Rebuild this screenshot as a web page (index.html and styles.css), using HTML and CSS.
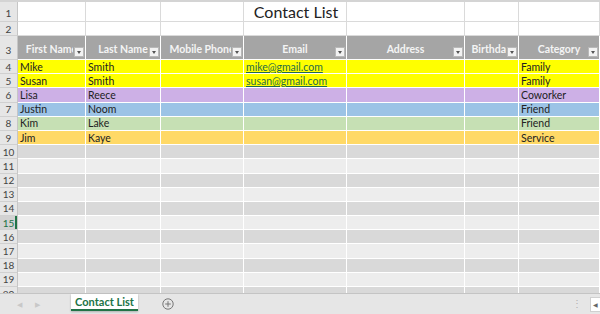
FILE: index.html
```html
<!DOCTYPE html>
<html lang="en">
<head>
  <meta charset="UTF-8">
  <title>Contact List</title>
  <link rel="stylesheet" href="styles.css">
</head>
<body>
  <div class="sheet">
    <div class="top-strip"></div>

    <div class="row blank r1">
      <div class="rh">1</div><div></div><div></div><div></div>
      <div class="title">Contact List</div><div></div><div></div><div></div>
    </div>
    <div class="row blank">
      <div class="rh">2</div><div></div><div></div><div></div><div></div><div></div><div></div><div></div>
    </div>

    <!-- table header -->
    <div class="row head">
      <div class="rh">3</div>
      <div><span>First Name</span><i class="drop"></i></div>
      <div><span>Last Name</span><i class="drop"></i></div>
      <div><span>Mobile Phone</span><i class="drop"></i></div>
      <div><span>Email</span><i class="drop"></i></div>
      <div><span>Address</span><i class="drop"></i></div>
      <div><span>Birthday</span><i class="drop"></i></div>
      <div><span>Category</span><i class="drop"></i></div>
    </div>

    <div class="row data yellow">
      <div class="rh">4</div><div>Mike</div><div>Smith</div><div></div>
      <div><a href="#">mike@gmail.com</a></div><div></div><div></div><div>Family</div>
    </div>
    <div class="row data yellow">
      <div class="rh">5</div><div>Susan</div><div>Smith</div><div></div>
      <div><a href="#">susan@gmail.com</a></div><div></div><div></div><div>Family</div>
    </div>
    <div class="row data purple">
      <div class="rh">6</div><div>Lisa</div><div>Reece</div><div></div>
      <div></div><div></div><div></div><div>Coworker</div>
    </div>
    <div class="row data blue">
      <div class="rh">7</div><div>Justin</div><div>Noom</div><div></div>
      <div></div><div></div><div></div><div>Friend</div>
    </div>
    <div class="row data green">
      <div class="rh">8</div><div>Kim</div><div>Lake</div><div></div>
      <div></div><div></div><div></div><div>Friend</div>
    </div>
    <div class="row data orange">
      <div class="rh">9</div><div>Jim</div><div>Kaye</div><div></div>
      <div></div><div></div><div></div><div>Service</div>
    </div>

    <!-- empty banded rows -->
    <div class="row data dark"><div class="rh">10</div><div></div><div></div><div></div><div></div><div></div><div></div><div></div></div>
    <div class="row data light"><div class="rh">11</div><div></div><div></div><div></div><div></div><div></div><div></div><div></div></div>
    <div class="row data dark"><div class="rh">12</div><div></div><div></div><div></div><div></div><div></div><div></div><div></div></div>
    <div class="row data light"><div class="rh">13</div><div></div><div></div><div></div><div></div><div></div><div></div><div></div></div>
    <div class="row data dark"><div class="rh">14</div><div></div><div></div><div></div><div></div><div></div><div></div><div></div></div>
    <div class="row data light"><div class="rh active">15</div><div></div><div></div><div></div><div></div><div></div><div></div><div></div></div>
    <div class="row data dark"><div class="rh">16</div><div></div><div></div><div></div><div></div><div></div><div></div><div></div></div>
    <div class="row data light"><div class="rh">17</div><div></div><div></div><div></div><div></div><div></div><div></div><div></div></div>
    <div class="row data dark"><div class="rh">18</div><div></div><div></div><div></div><div></div><div></div><div></div><div></div></div>
    <div class="row data light"><div class="rh">19</div><div></div><div></div><div></div><div></div><div></div><div></div><div></div></div>
    <div class="row data dark"><div class="rh">20</div><div></div><div></div><div></div><div></div><div></div><div></div><div></div></div>
  </div>

  <!-- sheet tabs -->
  <div class="tabbar">
    <span class="nav">&#9664;</span>
    <span class="nav">&#9654;</span>
    <div class="tab">Contact List</div>
    <svg class="add" width="12" height="12" viewBox="0 0 12 12">
      <circle cx="6" cy="6" r="5.2" fill="none" stroke="#777" stroke-width="1"/>
      <path d="M6 3.2v5.6M3.2 6h5.6" stroke="#777" stroke-width="1"/>
    </svg>
    <div class="spacer"></div>
    <span class="dots">&#8942;</span>
    <span class="scroll-left">&#9664;</span>
  </div>
</body>
</html>
```
FILE: styles.css
```css
body {
  margin: 0;
  width: 600px;
  height: 314px;
  overflow: hidden;
  font-family: Lato, "Liberation Sans", sans-serif;
  font-size: 10.5px;
  color: #222;
  background: #fff;
}

.sheet {
  height: 293px;
  overflow: hidden;
  display: flex;
  flex-direction: column;
}

.top-strip {
  height: 2px;
  flex-shrink: 0;
  background: #d4d4d4;
}

.row {
  display: grid;
  grid-template-columns: 18px 68px 75px 83px 103px 118px 54px 81px;
  flex-shrink: 0;
}

.row > div {
  box-sizing: border-box;
  border-right: 1px solid #fff;
  border-bottom: 1px solid #fff;
  white-space: nowrap;
  overflow: hidden;
  display: flex;
  align-items: center;
  padding-left: 2px;
}

.row > .rh {
  background: #e6e6e6;
  color: #444;
  justify-content: center;
  padding-left: 0;
  border-right: 1px solid #c6c6c6;
  border-bottom: 1px solid #d0d0d0;
  font-size: 10px;
}

.row > .rh.active {
  color: #217346;
  background: #d2d2d2;
  box-shadow: inset -2px 0 0 #217346;
}

.blank > div {
  border-right-color: #dadada;
  border-bottom-color: #dadada;
}

.r1 {
  height: 20px;
}

.blank:not(.r1) {
  height: 14px;
}

.r1 .rh {
  align-items: flex-end;
  padding-bottom: 2px;
}

.title {
  justify-content: center;
  font-size: 16px;
  color: #222;
  padding-left: 0;
}

.head {
  height: 24px;
}

.head > div:not(.rh) {
  background: #a5a5a5;
  color: #f4f4f4;
  font-weight: bold;
  font-size: 10.5px;
  justify-content: center;
  position: relative;
  padding: 0 2px;
}

.head span {
  margin-top: 2px;
}

.head .rh {
  align-items: flex-end;
  padding-bottom: 3px;
}

.drop {
  position: absolute;
  right: 1px;
  bottom: 2px;
  width: 10px;
  height: 10px;
  box-sizing: border-box;
  background: #f2f2f2;
  border: 1px solid #b8b8b8;
  box-shadow: -1px 0 0 #a5a5a5;
}

.drop::after {
  content: "";
  position: absolute;
  left: 2px;
  top: 3px;
  border-left: 2.5px solid transparent;
  border-right: 2.5px solid transparent;
  border-top: 3px solid #555;
}

.data {
  height: 14.2px;
}

.yellow > div:not(.rh) { background: #ffff00; }
.purple > div:not(.rh) { background: #cdb0e6; }
.blue > div:not(.rh) { background: #9cc3e6; }
.green > div:not(.rh) { background: #c6e0b4; }
.orange > div:not(.rh) { background: #ffd966; }
.dark > div:not(.rh) { background: #d9d9d9; }
.light > div:not(.rh) { background: #ededed; }

a {
  color: #1f6b4a;
  text-decoration: underline;
}

.tabbar {
  height: 21px;
  box-sizing: border-box;
  border-top: 1px solid #c4c4c4;
  background: #e6e6e6;
  display: flex;
  align-items: flex-start;
}

.nav {
  color: #c8c8c8;
  font-size: 7px;
  margin-top: 6px;
  margin-left: 17px;
}

.nav + .nav {
  margin-left: 13px;
}

.tab {
  margin-left: 31px;
  width: 67px;
  height: 17px;
  box-sizing: border-box;
  background: #fff;
  color: #217346;
  font-weight: bold;
  font-size: 11px;
  text-align: center;
  line-height: 15px;
  border-bottom: 2px solid #217346;
  box-shadow: 0 1px 2px rgba(0, 0, 0, 0.25);
}

.add {
  margin-left: 24px;
  margin-top: 4px;
}

.spacer {
  flex: 1;
}

.dots {
  color: #b0b0b0;
  font-size: 10px;
  margin-top: 3px;
  margin-right: 8px;
}

.scroll-left {
  width: 9px;
  height: 13px;
  margin-top: 3px;
  background: #fff;
  border: 1px solid #d0d0d0;
  border-right: none;
  color: #666;
  font-size: 6px;
  line-height: 13px;
  text-align: center;
}
```
